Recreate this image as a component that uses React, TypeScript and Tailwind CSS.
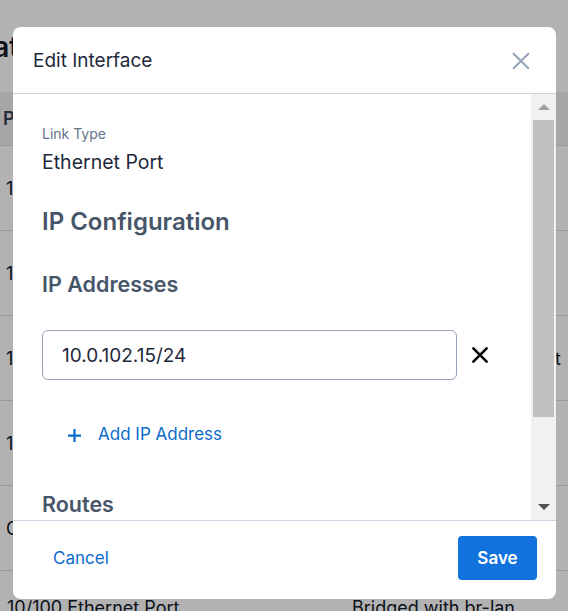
import React from "react";

function CloseIcon({ className }: { className?: string }) {
  return (
    <svg viewBox="0 0 24 24" className={className} fill="none" stroke="currentColor" strokeLinecap="round">
      <path d="M4 4L20 20M20 4L4 20" />
    </svg>
  );
}

function PlusIcon() {
  return (
    <svg viewBox="0 0 16 16" className="h-[15px] w-[15px]" fill="none" stroke="currentColor" strokeWidth="2.4">
      <path d="M8 1V15M1 8H15" />
    </svg>
  );
}

export default function App() {
  const rows = [
    { a: "10/100 Ethernet Port", b: "" },
    { a: "10/100 Ethernet Port", b: "" },
    { a: "10/100 Ethernet Port", b: "Ethernet Port" },
    { a: "10/100 Ethernet Port", b: "" },
    { a: "Cellular Modem", b: "" },
  ];
  return (
    <div
      className="relative h-[611px] w-[568px] overflow-hidden bg-white"
      style={{ fontFamily: "Inter, 'Noto Sans', sans-serif" }}
    >
      {/* background page */}
      <div className="flex flex-col">
        <div className="h-[92px] pt-[30px]">
          <div className="ml-[-35px] text-[28px] font-semibold leading-[34px] text-[#111827]">Stat</div>
        </div>
        <div className="flex h-[54px] items-center border-b border-[#dcdcdc] bg-[#eeeeee] pl-[3px] text-[18px] font-semibold text-[#374151]">
          Port
        </div>
        {rows.map((r, i) => (
          <div
            key={i}
            className="flex h-[85px] items-center justify-between border-b border-[#dcdcdc] pl-[6px] pr-[7px] text-[18px] text-[#111827]"
          >
            <span>{r.a}</span>
            <span>{r.b}</span>
          </div>
        ))}
        <div className="flex h-[40px] items-start pl-[7px] pt-[23px] text-[18px] text-[#111827]">
          <span className="w-[345px]">10/100 Ethernet Port</span>
          <span>Bridged with br-lan</span>
        </div>
      </div>

      {/* overlay */}
      <div className="absolute inset-0 bg-black/30" />

      {/* modal */}
      <div className="absolute left-[13px] top-[27px] flex h-[572px] w-[543px] flex-col overflow-hidden rounded-[8px] bg-white">
        <div className="flex h-[67px] shrink-0 items-center justify-between border-b border-[#cbd5e1] pl-[20px] pr-[24px] pt-[2px]">
          <h2 className="text-[19px] font-normal text-[#1e293b]">Edit Interface</h2>
          <button className="text-[#94a3b8]">
            <CloseIcon className="h-[22px] w-[22px] stroke-[2.2]" />
          </button>
        </div>

        <div className="flex min-h-0 flex-1">
          <div className="min-w-0 flex-1 overflow-hidden">
            <div className="pl-[29px] pr-[28px] pt-[30px] pb-[40px]">
              <div className="text-[14px] leading-[20px] text-[#64748b]">Link Type</div>
              <div className="mt-[4px] text-[19.5px] leading-[28px] text-[#1e293b]">Ethernet Port</div>

              <h3 className="mt-[30px] text-[24px] font-semibold leading-[32px] text-[#475569]">IP Configuration</h3>
              <h4 className="mt-[32px] text-[21.5px] font-semibold leading-[28px] text-[#475569]">IP Addresses</h4>

              <div className="mt-[32px] flex items-center">
                <input
                  readOnly
                  value="10.0.102.15/24"
                  className="box-border h-[50px] min-w-0 flex-1 rounded-[6px] border border-[#94a3b8] px-[19px] text-[19px] text-[#1e293b] outline-none"
                  style={{ fontFamily: "Inter, 'Noto Sans', sans-serif" }}
                />
                <button className="flex h-[40px] w-[46px] items-center justify-center text-black">
                  <CloseIcon className="h-[20px] w-[20px] stroke-[3]" />
                </button>
              </div>

              <button className="mt-[35px] flex h-[40px] items-center gap-[16px] pl-[25px] text-[17px] text-[#0b6bcb]">
                <PlusIcon />
                Add IP Address
              </button>

              <h4 className="mt-[35px] text-[21.5px] font-semibold leading-[28px] text-[#475569]">Routes</h4>

              <button className="mt-[30px] flex h-[40px] items-center gap-[16px] pl-[25px] text-[17px] text-[#0b6bcb]">
                <PlusIcon />
                Add Route
              </button>
            </div>
          </div>

          {/* scrollbar */}
          <div className="flex w-[25px] shrink-0 flex-col bg-[#f1f1f1]">
            <div className="flex h-[26px] shrink-0 items-center justify-center">
              <div className="h-0 w-0 border-x-[6px] border-b-[6px] border-x-transparent border-b-[#a3a3a3]" />
            </div>
            <div className="mx-[2px] h-[297px] shrink-0 bg-[#c1c1c1]" />
            <div className="flex-1" />
            <div className="flex h-[26px] shrink-0 items-center justify-center">
              <div className="h-0 w-0 border-x-[6px] border-t-[6px] border-x-transparent border-t-[#505050]" />
            </div>
          </div>
        </div>

        <div className="flex h-[79px] shrink-0 items-start justify-between border-t border-[#cbd5e1] pl-[20px] pr-[19px] pt-[15px]">
          <button className="h-[44px] px-[20px] pt-[2px] text-[17px] text-[#0b6bcb]">Cancel</button>
          <button className="h-[44px] w-[79px] rounded-[4px] bg-[#1273de] pt-[2px] text-[17px] font-semibold text-white">
            Save
          </button>
        </div>
      </div>
    </div>
  );
}
